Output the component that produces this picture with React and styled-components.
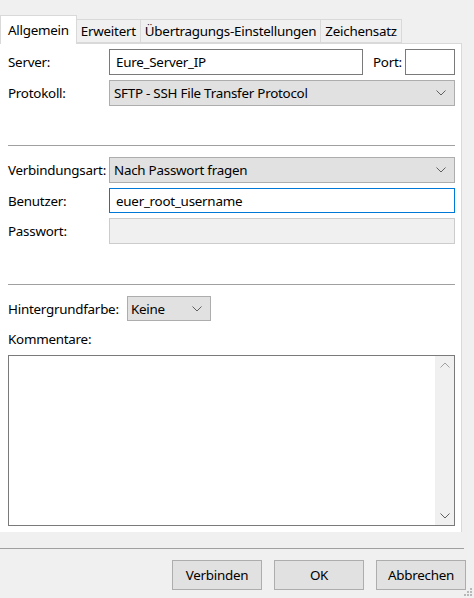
import React from "react";
import styled, { createGlobalStyle } from "styled-components";

const Global = createGlobalStyle`
  html, body { margin: 0; padding: 0; background: #f0f0f0; }
  body { font-family: "Noto Sans", "Open Sans", sans-serif; font-size: 13px; color: #000; }
  * { box-sizing: border-box; }
`;

const Window = styled.div`
  width: 474px;
  height: 598px;
  background: #f0f0f0;
  display: flex;
  flex-direction: column;
  position: relative;
  overflow: hidden;
`;

const TabBar = styled.div`
  display: flex;
  align-items: flex-end;
  padding-top: 14px;
  height: 43px;
  position: relative;
  z-index: 1;
`;

const Tab = styled.div`
  height: ${(p) => (p.$active ? 29 : 24)}px;
  padding: 0 ${(p) => (p.$active ? 7 : 4)}px;
  display: flex;
  align-items: center;
  background: ${(p) => (p.$active ? "#fff" : "#f0f0f0")};
  border: 1px solid #d9d9d9;
  border-bottom: ${(p) => (p.$active ? "none" : "1px solid #d9d9d9")};
  margin-left: ${(p) => (p.$first ? 0 : -1)}px;
  margin-bottom: ${(p) => (p.$active ? -1 : 0)}px;
  white-space: nowrap;
  font-size: 13.4px;
  letter-spacing: -0.25px;
`;

const Panel = styled.div`
  width: 462px;
  height: 489px;
  background: #fff;
  border-right: 1px solid #d9d9d9;
  border-top: 1px solid #d9d9d9;
  padding: 5px 6px 0 8px;
  display: flex;
  flex-direction: column;
`;

const Row = styled.div`
  display: flex;
  align-items: center;
  height: ${(p) => p.$h || 26}px;
  margin-top: ${(p) => p.$mt || 0}px;
`;

const Label = styled.div`
  width: ${(p) => p.$w || 101}px;
  flex: none;
  font-size: 13.4px;
  letter-spacing: -0.25px;
`;

const Field = styled.div`
  flex: ${(p) => (p.$w ? "none" : 1)};
  width: ${(p) => (p.$w ? p.$w + "px" : "auto")};
  height: 100%;
  display: flex;
  align-items: center;
  padding-left: ${(p) => p.$pl || 6}px;
  padding-right: 8px;
  border: 1px solid
    ${(p) =>
      p.$focus ? "#0078d7" : p.$disabled ? "#cccccc" : p.$select ? "#adadad" : "#7a7a7a"};
  background: ${(p) => (p.$disabled ? "#f0f0f0" : p.$select ? "#e1e1e1" : "#fff")};
  font-size: 13.4px;
  letter-spacing: -0.25px;
  white-space: nowrap;
`;

const FieldText = styled.span`
  flex: 1;
`;

const PortLabel = styled.div`
  margin-left: 10px;
  width: 32px;
  font-size: 13.4px;
  letter-spacing: -0.25px;
`;

const Separator = styled.div`
  height: 1px;
  background: #a0a0a0;
  margin-top: ${(p) => p.$mt}px;
  width: ${(p) => p.$w || "auto"};
`;

const Textarea = styled.div`
  margin-top: 6px;
  height: 171px;
  border: 1px solid #7a7a7a;
  display: flex;
  justify-content: flex-end;
`;

const Scrollbar = styled.div`
  width: 19px;
  background: #f0f0f0;
  display: flex;
  flex-direction: column;
  justify-content: space-between;
  align-items: center;
  padding: 6px 0;
`;

const Footer = styled.div`
  flex: 1;
  display: flex;
  flex-direction: column;
`;

const ButtonBar = styled.div`
  display: flex;
  justify-content: flex-end;
  gap: 12px;
  padding: 11px 8px 0 0;
`;

const Button = styled.div`
  width: 90px;
  height: 30px;
  background: #e1e1e1;
  border: 1px solid #adadad;
  display: flex;
  align-items: center;
  justify-content: center;
  font-size: 13.4px;
  letter-spacing: -0.25px;
`;

const Grip = styled.svg`
  position: absolute;
  right: 1px;
  bottom: 1px;
`;

const Chevron = ({ up }) => (
  <svg width="10" height="6" viewBox="0 0 10 6">
    <path
      d={up ? "M0.5 5.5 L5 1 L9.5 5.5" : "M0.5 0.5 L5 5 L9.5 0.5"}
      fill="none"
      stroke={up ? "#a0a0a0" : "#606060"}
      strokeWidth="1"
    />
  </svg>
);

export default function App() {
  return (
    <Window>
      <Global />
      <TabBar>
        <Tab $active $first>Allgemein</Tab>
        <Tab>Erweitert</Tab>
        <Tab>Übertragungs-Einstellungen</Tab>
        <Tab>Zeichensatz</Tab>
      </TabBar>
      <Panel>
        <Row>
          <Label>Server:</Label>
          <Field>Eure_Server_IP</Field>
          <PortLabel>Port:</PortLabel>
          <Field $w={50} />
        </Row>
        <Row $mt={5}>
          <Label>Protokoll:</Label>
          <Field $select $pl={4}>
            <FieldText>SFTP - SSH File Transfer Protocol</FieldText>
            <Chevron />
          </Field>
        </Row>
        <Separator $mt={39} />
        <Row $mt={11}>
          <Label>Verbindungsart:</Label>
          <Field $select $pl={4}>
            <FieldText>Nach Passwort fragen</FieldText>
            <Chevron />
          </Field>
        </Row>
        <Row $mt={5} $h={25}>
          <Label>Benutzer:</Label>
          <Field $focus>euer_root_username</Field>
        </Row>
        <Row $mt={5}>
          <Label>Passwort:</Label>
          <Field $disabled />
        </Row>
        <Separator $mt={40} />
        <Row $mt={11} $h={25}>
          <Label $w={119}>Hintergrundfarbe:</Label>
          <Field $select $w={84} $pl={3}>
            <FieldText>Keine</FieldText>
            <Chevron />
          </Field>
        </Row>
        <Row $mt={8} $h={20}>
          <Label>Kommentare:</Label>
        </Row>
        <Textarea>
          <Scrollbar>
            <Chevron up />
            <Chevron />
          </Scrollbar>
        </Textarea>
      </Panel>
      <Footer>
        <Separator $mt={16} $w="464px" />
        <ButtonBar>
          <Button>Verbinden</Button>
          <Button>OK</Button>
          <Button>Abbrechen</Button>
        </ButtonBar>
      </Footer>
      <Grip width="10" height="10" viewBox="0 0 10 10">
        {[
          [8, 2], [8, 5], [8, 8], [5, 5], [5, 8], [2, 8],
        ].map(([x, y], i) => (
          <rect key={i} x={x - 1} y={y - 1} width="2" height="2" fill="#b8b8b8" />
        ))}
      </Grip>
    </Window>
  );
}
